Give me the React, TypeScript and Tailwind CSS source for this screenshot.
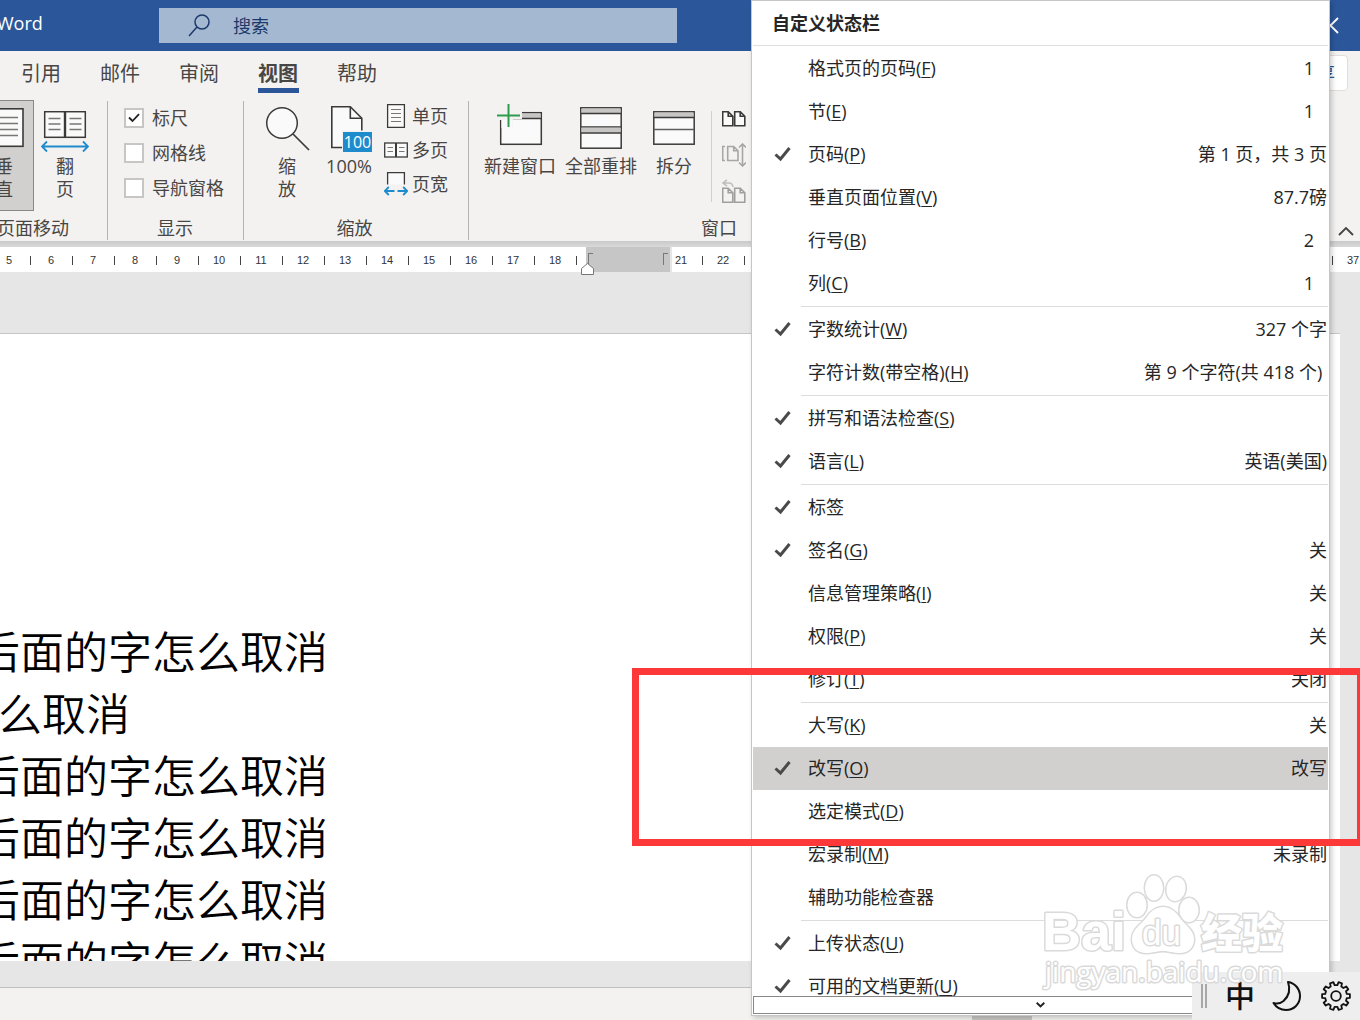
import React from 'react';

type Item = { label: string; key?: string; value?: string; checked?: boolean; pad?: boolean; active?: boolean };

const GROUPS: Item[][] = [
  [
    { label: '格式页的页码', key: 'F', value: '1', pad: true },
    { label: '节', key: 'E', value: '1', pad: true },
    { label: '页码', key: 'P', value: '第 1 页，共 3 页', checked: true },
    { label: '垂直页面位置', key: 'V', value: '87.7磅' },
    { label: '行号', key: 'B', value: '2', pad: true },
    { label: '列', key: 'C', value: '1', pad: true },
  ],
  [
    { label: '字数统计', key: 'W', value: '327 个字', checked: true },
    { label: '字符计数(带空格)', key: 'H', value: '第 9 个字符(共 418 个)\u00a0' },
  ],
  [
    { label: '拼写和语法检查', key: 'S', checked: true },
    { label: '语言', key: 'L', value: '英语(美国)', checked: true },
  ],
  [
    { label: '标签', checked: true },
    { label: '签名', key: 'G', value: '关', checked: true },
    { label: '信息管理策略', key: 'I', value: '关' },
    { label: '权限', key: 'P', value: '关' },
    { label: '修订', key: 'T', value: '关闭' },
  ],
  [
    { label: '大写', key: 'K', value: '关' },
    { label: '改写', key: 'O', value: '改写', checked: true, active: true },
    { label: '选定模式', key: 'D' },
    { label: '宏录制', key: 'M', value: '未录制' },
    { label: '辅助功能检查器' },
  ],
  [
    { label: '上传状态', key: 'U', checked: true },
    { label: '可用的文档更新', key: 'U', checked: true },
  ],
];

function MenuRow({ item }: { item: Item }) {
  return (
    <button
      type="button"
      role="menuitemcheckbox"
      aria-checked={!!item.checked}
      className={`flex h-[43px] w-full items-center pb-0.5 pl-5 text-left ${item.active ? 'bg-[#d2d0ce]' : ''} ${item.pad ? 'pr-3.5' : 'pr-px'}`}
    >
      <span className="w-[35px] shrink-0">
        {item.checked && (
          <svg width="20" height="16" viewBox="0 0 20 16" fill="none" stroke="#4a4a4a" strokeWidth="3" className="block">
            <path d="M2.5 8.5L7.5 13L16.5 2" />
          </svg>
        )}
      </span>
      <span className="grow">
        {item.label}
        {item.key && (
          <>
            (<span className="underline underline-offset-2">{item.key}</span>)
          </>
        )}
      </span>
      <span>{item.value}</span>
    </button>
  );
}

function StatusMenu() {
  return (
    <div
      role="menu"
      aria-label="自定义状态栏"
      className="absolute right-[30px] top-0 flex h-[1016px] w-[579px] flex-col border border-[#c6c6c6] bg-white px-px text-lg leading-6 text-[#262626] shadow-[2px_2px_5px_rgba(0,0,0,0.2)]"
    >
      <h2 className="flex h-[45px] shrink-0 items-center border-b border-[#e1dfdd] pl-[19px] font-bold">自定义状态栏</h2>
      <div className="min-h-0 grow overflow-hidden pt-px">
        {GROUPS.map((g, i) => (
          <React.Fragment key={i}>
            {i > 0 && <div role="separator" className="my-px ml-12 h-px bg-[#dcdcdc]" />}
            {g.map((it) => (
              <MenuRow key={it.label} item={it} />
            ))}
          </React.Fragment>
        ))}
      </div>
      <button type="button" aria-label="向下滚动" className="mb-px flex h-[18px] shrink-0 items-center justify-center border border-[#8a8886] bg-white">
        <svg width="9" height="6" viewBox="0 0 9 6" fill="none" stroke="#222" strokeWidth="2">
          <path d="M.7 .8L4.5 4.4L8.3 .8" />
        </svg>
      </button>
    </div>
  );
}

const TABS = ['引用', '邮件', '审阅', '视图', '帮助'];

function VerticalIcon() {
  return (
    <svg width="48" height="40" viewBox="0 0 48 40" fill="none" className="block shrink-0">
      <rect x="8" y=".8" width="35" height="37.5" fill="#fafafa" stroke="#3b3a39" strokeWidth="1.6" />
      <path d="M12 9.5h26M12 15.5h26M12 21.5h26M12 27.5h26" stroke="#797775" strokeWidth="1.5" />
    </svg>
  );
}

function FlipIcon() {
  return (
    <svg width="48" height="42" viewBox="0 0 48 42" fill="none" className="block">
      <rect x="3.7" y=".7" width="40.6" height="25.6" fill="#fafafa" stroke="#3b3a39" strokeWidth="1.5" />
      <path d="M24 1v25" stroke="#3b3a39" strokeWidth="2.4" />
      <path d="M7.5 7.500h12M7.500 13h12M7.500 18.500h12M28.500 7.500h12M28.500 13h12M28.500 18.500h12" stroke="#797775" strokeWidth="1.4" />
      <path d="M1 35.500h46M6 30.500l-5 5 5 5M42 30.500l5 5-5 5" stroke="#1e8bcd" strokeWidth="1.8" />
    </svg>
  );
}

function Magnifier() {
  return (
    <svg width="46" height="46" viewBox="0 0 46 46" fill="none" stroke="#3b3a39" className="block">
      <circle cx="17" cy="17" r="15.3" fill="#fafafa" strokeWidth="1.5" />
      <path d="M28 28l16 16" strokeWidth="1.7" />
    </svg>
  );
}

function HundredIcon() {
  return (
    <svg width="42" height="46" viewBox="0 0 42 46" fill="none" className="block">
      <path d="M1.800 .8h18.500l11.500 11.500v29.200h-30z" fill="#fafafa" stroke="#3b3a39" strokeWidth="1.6" />
      <path d="M20.300 .8v11.500h11.500" stroke="#3b3a39" strokeWidth="1.6" />
      <rect x="12" y="24.5" width="30" height="21.5" fill="#f3f2f1" />
      <rect x="13" y="26" width="29" height="20" fill="#1e8bcd" />
      <text x="27.5" y="42" fontSize="16" textAnchor="middle" fill="#fff" className="font-['Open_Sans']">100</text>
    </svg>
  );
}

function OnePage() {
  return (
    <svg width="24" height="24" viewBox="0 0 24 24" fill="none" className="block shrink-0">
      <rect x="3.6" y=".6" width="16.8" height="22.8" fill="#fafafa" stroke="#3b3a39" strokeWidth="1.3" />
      <path d="M7 5.500h10M7 9.500h10M7 13.500h10M7 17.500h10" stroke="#797775" strokeWidth="1.2" />
    </svg>
  );
}

function MultiPage() {
  return (
    <svg width="24" height="24" viewBox="0 0 24 24" fill="none" className="block shrink-0">
      <rect x=".7" y="5" width="22.6" height="14" fill="#fafafa" stroke="#3b3a39" strokeWidth="1.3" />
      <path d="M12 5v14" stroke="#3b3a39" strokeWidth="2" />
      <path d="M3.500 9.500h5.500M3.500 13.500h5.500M15 9.500h5.500M15 13.500h5.500" stroke="#797775" strokeWidth="1.2" />
    </svg>
  );
}

function PageWidth() {
  return (
    <svg width="24" height="24" viewBox="0 0 24 24" fill="none" className="block shrink-0">
      <path d="M3.600 12.500V.7h16.800v11.800" fill="#fafafa" stroke="#3b3a39" strokeWidth="1.3" />
      <path d="M.8 19h9.700M13.500 19h9.700M4.800 15L.8 19l4 4M19.200 15l4 4-4 4" stroke="#1e8bcd" strokeWidth="1.8" />
    </svg>
  );
}

function NewWindowIcon() {
  return (
    <svg width="46" height="42" viewBox="0 0 46 42" fill="none" className="block">
      <rect x="3.7" y="8.7" width="40.6" height="31.6" fill="#fafafa" stroke="#3b3a39" strokeWidth="1.5" />
      <path d="M4.500 9.500h39v5h-39z" fill="#c8c6c4" />
      <path d="M3 14.500h42" stroke="#3b3a39" strokeWidth="1.3" />
      <path d="M0 5h25v10h-9v9h-8v-8h-8z" fill="#f3f2f1" />
      <path d="M4.500 16h11v8h-11z" fill="#fafafa" />
      <path d="M0 11.500h23M11.500 0v23" stroke="#2e9b4f" strokeWidth="2" />
    </svg>
  );
}

function ArrangeIcon() {
  return (
    <svg width="42" height="42" viewBox="0 0 42 42" fill="none" className="block">
      <rect x=".8" y=".8" width="40.4" height="40.4" fill="#fafafa" stroke="#3b3a39" strokeWidth="1.5" />
      <path d="M1.500 1.500h39v5h-39zM1.500 20.500h39v5h-39z" fill="#c8c6c4" />
      <path d="M1 6.500h40M1 19.800h40M1 26h40" stroke="#3b3a39" strokeWidth="1.3" />
    </svg>
  );
}

function SplitIcon() {
  return (
    <svg width="42" height="34" viewBox="0 0 42 34" fill="none" className="block">
      <rect x=".8" y=".8" width="40.4" height="32.4" fill="#fafafa" stroke="#3b3a39" strokeWidth="1.5" />
      <path d="M1.500 1.500h39v5h-39z" fill="#c8c6c4" />
      <path d="M1 6.500h40" stroke="#3b3a39" strokeWidth="1.3" />
      <path d="M1 18.500h40" stroke="#605e5c" strokeWidth="1.5" />
    </svg>
  );
}

const TWO_PAGES = 'M.7 .7h5.500l4.600 4.600v9.400H.7zM6.200 .7v4.600h4.600M12.700 .7h5.500l4.600 4.600v9.400H12.700zM18.200 .7v4.600h4.600';

function WindowSideIcons() {
  return (
    <div className="flex flex-col gap-3">
      <svg width="24" height="20" viewBox="0 0 24 20" fill="#fafafa" stroke="#3b3a39" strokeWidth="1.6">
        <path d={TWO_PAGES} />
      </svg>
      <svg width="24" height="24" viewBox="0 0 24 24" fill="none" stroke="#a8a6a4" strokeWidth="1.6">
        <path d="M3 3.500H.7v14H3M5.700 3.500h6l4.300 4.300v9.700H5.700zM11.700 3.500v4.300H16M20.500 1v22M17 4.500L20.500 1 24 4.500M17 19.500l3.500 3.500 3.500-3.500" />
      </svg>
      <svg width="24" height="24" viewBox="0 0 24 24" fill="none" stroke="#a19f9d" strokeWidth="1.6">
        <path d="M5 .8L1 4l4 3.200M1 4h6q3.500 0 4 4" stroke="#c0bebc" />
        <g transform="translate(0 8.500)">
          <path d={TWO_PAGES} />
        </g>
      </svg>
    </div>
  );
}

function BigButton({ icon, label, className }: { icon: React.ReactNode; label: React.ReactNode; className: string }) {
  return (
    <button type="button" className={`flex shrink-0 flex-col items-center justify-between text-lg leading-6 ${className}`}>
      {icon}
      <span>{label}</span>
    </button>
  );
}

function Ribbon() {
  return (
    <div className="flex h-[190px] shrink-0 flex-col bg-[#f3f2f1] text-[#484644]">
      <nav className="flex h-[42px] shrink-0 gap-[38px] pl-[21px]">
        {TABS.map((t) => (
          <a
            key={t}
            href="#"
            className={
              t === '视图'
                ? 'w-[41px] border-b-5 border-[#2b579a] pt-[9px] text-xl font-bold leading-7'
                : 'w-[41px] pt-[9px] text-xl leading-7'
            }
          >
            {t}
          </a>
        ))}
      </nav>
      <div className="flex grow pb-px">
        <section className="flex w-[107px] shrink-0 flex-col overflow-hidden">
          <div className="flex pt-[7px]">
            <button type="button" className="-ml-[26px] flex h-[111px] w-[60px] shrink-0 flex-col items-center border border-[#8a8886] bg-[#d2d0ce] pt-[7px] text-lg leading-[23px]">
              <VerticalIcon />
              <span className="mt-[7px]">垂<br />直</span>
            </button>
            <div className="pl-[7px] pt-[11px]">
              <BigButton className="h-[90px]" icon={<FlipIcon />} label={<span className="block leading-[23px]">翻<br />页</span>} />
            </div>
          </div>
          <div className="-ml-[3px] mt-auto text-lg leading-6">页面移动</div>
        </section>

        <section className="mt-2 flex w-[136px] shrink-0 flex-col border-l border-[#b5b3b1] pl-4">
          <div className="flex flex-col gap-[11px] pt-[5px]">
            {['标尺', '网格线', '导航窗格'].map((t, i) => (
              <label key={t} className="flex h-6 items-center gap-2 text-lg leading-6">
                <span className="relative flex">
                  <input type="checkbox" defaultChecked={i === 0} className="size-5 appearance-none border-2 border-[#c8c6c4] bg-white" />
                  {i === 0 && (
                    <svg width="12" height="10" viewBox="0 0 12 10" fill="none" stroke="#222" strokeWidth="1.8" className="pointer-events-none absolute left-1 top-[5px]">
                      <path d="M1 4.500L4.500 8 11 1.200" />
                    </svg>
                  )}
                </span>
                {t}
              </label>
            ))}
          </div>
          <div className="mt-auto pl-[33px] text-lg leading-6">显示</div>
        </section>

        <section className="mt-2 flex w-[225px] shrink-0 flex-col border-l border-[#b5b3b1]">
          <div className="flex pt-[5px]">
            <BigButton className="ml-[21px] h-[95px]" icon={<Magnifier />} label={<span className="block pr-0.5 leading-[23px]">缩<br />放</span>} />
            <BigButton className="ml-3 h-[72px] w-[52px]" icon={<span className="block pl-1"><HundredIcon /></span>} label="100%" />
            <div className="-mt-0.5 ml-[9px] flex flex-col gap-[10px]">
              <button type="button" className="flex items-center gap-1 text-lg leading-6"><OnePage />单页</button>
              <button type="button" className="flex items-center gap-1 text-lg leading-6"><MultiPage />多页</button>
              <button type="button" className="flex items-center gap-1 text-lg leading-6"><PageWidth />页宽</button>
            </div>
          </div>
          <div className="mt-auto pr-[3px] text-center text-lg leading-6">缩放</div>
        </section>

        <section className="mt-2 flex grow flex-col border-l border-[#b5b3b1]">
          <div className="flex items-start">
            <BigButton className="ml-[15px] mt-[3px] h-[74px]" icon={<NewWindowIcon />} label="新建窗口" />
            <BigButton className="ml-[9px] mt-1.5 h-[71px]" icon={<ArrangeIcon />} label="全部重排" />
            <BigButton className="ml-4 mt-[10px] h-[67px]" icon={<SplitIcon />} label="拆分" />
            <div className="ml-4 mt-[10px] h-[91px] border-l border-[#d2d0ce] pl-[10px]"><WindowSideIcons /></div>
          </div>
          <div className="mt-auto pl-[232px] text-lg leading-6">窗口</div>
        </section>
      </div>
    </div>
  );
}

function Tick({ label }: { label: string }) {
  return (
    <span className="flex w-[42px] shrink-0 items-center">
      <span className="w-[20px] shrink-0 text-center">{label}</span>
      <span className="ml-[11px] h-[9px] w-px bg-[#444]" />
    </span>
  );
}

const LEFT_TICKS = ['5', '6', '7', '8', '9', '10', '11', '12', '13', '14', '15', '16', '17', '18'];
const RIGHT_TICKS = ['21', '22', '23', '24', '25', '26', '27', '28', '29', '30', '31', '32', '33', '34', '35', '36', '37'];

function Ruler() {
  return (
    <div className="flex h-[25px] shrink-0 bg-white text-[11px] leading-4 text-[#333] font-['Liberation_Sans']">
      <div className="-ml-px flex shrink-0 pt-px">
        {LEFT_TICKS.map((n) => <Tick key={n} label={n} />)}
      </div>
      <div className="relative -ml-px flex w-[86px] shrink-0 items-start justify-between border-r-2 border-[#e6e6e6] bg-[#c6c6c6] px-[2px] pt-1.5">
        <span className="h-3 w-[5px] border-l border-t border-[#777]" />
        <span className="h-3 w-[5px] border-l border-t border-[#777]" />
        <svg width="13" height="12" viewBox="0 0 13 12" fill="#fff" stroke="#777" className="absolute -left-[5px] top-4">
          <path d="M.5 11.500v-6l6-5 6 5v6z" />
        </svg>
      </div>
      <div className="-ml-px flex min-w-0 grow overflow-hidden pt-px">
        {RIGHT_TICKS.map((n) => <Tick key={n} label={n} />)}
      </div>
    </div>
  );
}

function Watermark() {
  return (
    <svg
      width="260"
      height="130"
      viewBox="0 0 260 130"
      aria-label="Baidu 经验"
      fill="#fff"
      stroke="#dadada"
      strokeWidth="3"
      strokeLinejoin="round"
      className="pointer-events-none absolute bottom-[25px] right-[65px] [paint-order:stroke]"
    >
      <text x="7" y="85" fontSize="54" fontWeight="700" className="font-['Liberation_Sans']">Bai</text>
      <g strokeWidth="3">
        <ellipse cx="102" cy="40" rx="9.5" ry="12" />
        <ellipse cx="119" cy="23" rx="9" ry="12.5" />
        <ellipse cx="141" cy="24" rx="9.5" ry="12" transform="rotate(12 141 24)" />
        <ellipse cx="154" cy="45" rx="9.5" ry="12" />
        <path d="M128 42c-8 0-13 5-17 11-5 7-14 11-14 21 0 9 6 14 14 14 7 0 11-2 17-2s10 2 17 2c8 0 14-5 14-14 0-9-9-14-14-21-4-6-9-11-17-11z" />
      </g>
      <text x="107" y="80" fontSize="35" className="font-['Liberation_Sans']">du</text>
      <text x="166" y="83" fontSize="41" fontWeight="900" className="font-['Noto_Sans_CJK_SC']">经验</text>
      <text x="10" y="117" fontSize="28" fontWeight="500" className="font-['Open_Sans']">jingyan.baidu.com</text>
    </svg>
  );
}

function Gear() {
  const pts: string[] = [];
  const n = 10;
  for (let i = 0; i < n; i++) {
    [[-0.3, 11], [-0.2, 14], [0.2, 14], [0.3, 11]].forEach(([a, r]) => {
      const t = ((i + 0.5 + a) * 2 * Math.PI) / n - Math.PI / 2;
      pts.push(`${(16 + r * Math.cos(t)).toFixed(1)},${(16 + r * Math.sin(t)).toFixed(1)}`);
    });
  }
  return (
    <svg width="32" height="32" viewBox="0 0 32 32" fill="none" stroke="#111" strokeWidth="1.8" strokeLinejoin="round">
      <polygon points={pts.join(' ')} />
      <circle cx="16" cy="16" r="4.8" />
    </svg>
  );
}

function ImeBar() {
  return (
    <div className="absolute bottom-0 right-0 flex h-12 w-[168px] items-center bg-[#eeeeee] pl-[9px] text-[#111]">
      <span className="h-6 w-1.5 border-x-2 border-[#a8a8a8]" />
      <button type="button" className="ml-[18px] text-[30px] font-medium leading-9">中</button>
      <button type="button" aria-label="月亮" className="ml-[17px]">
        <svg width="30" height="32" viewBox="0 0 30 32" fill="none" stroke="#111" strokeWidth="2" strokeLinejoin="round" className="block">
          <path d="M16 2c7 1 12 7 12 14 0 8-6 14-14 14-5 0-10-3-12.500-7 3 1 7 .5 10-2 5.500-5 7-12 4.500-19z" />
        </svg>
      </button>
      <button type="button" aria-label="设置" className="ml-[18px] flex shrink-0"><Gear /></button>
    </div>
  );
}

const LINES = [
  { text: '后面的字怎么取消', short: false },
  { text: '么取消', short: true },
  { text: '后面的字怎么取消', short: false },
  { text: '后面的字怎么取消', short: false },
  { text: '后面的字怎么取消', short: false },
  { text: '后面的字怎么取消', short: false },
];

export default function App() {
  return (
    <div className="relative flex h-screen min-h-[1020px] flex-col overflow-hidden bg-[#e6e6e6] font-['Open_Sans','Noto_Sans_CJK_SC',sans-serif]">
      <header className="flex h-[51px] shrink-0 items-center bg-[#2b579a] text-white">
        <span className="-ml-[3px] w-[162px] shrink-0 pb-1.5 text-lg leading-6">Word</span>
        <label className="flex h-[35px] w-[518px] items-center bg-[#a5b8d1] pl-[29px] text-[#1b3a6b]">
          <svg width="23" height="23" viewBox="0 0 23 23" fill="none" stroke="#1b3a6b" strokeWidth="1.5" className="shrink-0">
            <circle cx="14" cy="8" r="7" />
            <path d="M9 13L1 22" />
          </svg>
          <input aria-label="搜索" placeholder="搜索" className="ml-[22px] min-w-0 grow bg-transparent text-lg leading-6 outline-none placeholder:text-[#1b3a6b]" />
        </label>
        <button type="button" aria-label="关闭" className="ml-auto mr-[21px]">
          <svg width="17" height="17" viewBox="0 0 17 17" stroke="#fff" strokeWidth="1.8" className="block">
            <path d="M1 1l15 15M16 1L1 16" />
          </svg>
        </button>
      </header>
      <div className="relative flex flex-col">
        <Ribbon />
        <button type="button" className="absolute right-3 top-1 h-9 w-[90px] rounded-sm border border-[#e1dfdd] bg-white pr-3 text-right text-lg leading-6 text-[#2b579a]">共享</button>
        <button type="button" aria-label="折叠功能区" className="absolute bottom-[5px] right-1.5">
          <svg width="16" height="9" viewBox="0 0 16 9" fill="none" stroke="#444" strokeWidth="1.8" className="block">
            <path d="M1 8l7-7 7 7" />
          </svg>
        </button>
      </div>
      <div className="h-1.5 shrink-0 bg-linear-to-b from-[#cacaca] to-[#d9d9d9]" />
      <Ruler />
      <main className="mr-5 mt-[61px] min-h-0 grow overflow-hidden border-t border-[#c6c6c6] bg-white pt-[287px] text-[44px] leading-[62px] text-black">
        {LINES.map((l, i) => (
          <p key={i} className={`whitespace-nowrap font-[350] ${l.short ? '-ml-0.5' : '-ml-6'}`}>{l.text}</p>
        ))}
      </main>
      <div className="h-[26px] shrink-0" />
      <footer className="flex h-[33px] shrink-0 items-end border-t border-[#c0c0c0] bg-[#f3f2f1]">
        <div className="ml-auto mr-[328px] h-[5px] w-[60px] bg-[#c8c6c4]" />
      </footer>
      <StatusMenu />
      <div className="pointer-events-none absolute right-0 top-[668px] h-[178px] w-[728px] border-7 border-r-3 border-[#fd3838]" />
      <ImeBar />
      <Watermark />
    </div>
  );
}
